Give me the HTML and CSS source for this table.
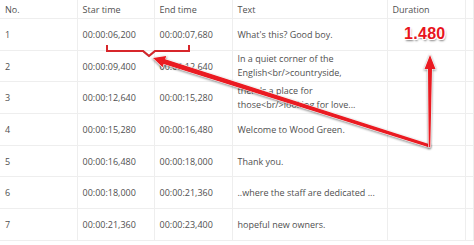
FILE: index.html
```html
<!DOCTYPE html>
<html>
<head>
<meta charset="utf-8">
<link rel="stylesheet" href="styles.css">
</head>
<body>
<div class="page">
  <table class="subs">
    <colgroup>
      <col class="c-no"><col class="c-start"><col class="c-end"><col class="c-text"><col class="c-dur"><col class="c-extra">
    </colgroup>
    <thead>
      <tr><th>No.</th><th>Star time</th><th>End time</th><th>Text</th><th>Duration</th><th></th></tr>
    </thead>
    <tbody>
      <tr><td>1</td><td>00:00:06,200</td><td>00:00:07,680</td><td>What's this? Good boy.</td><td></td><td></td></tr>
      <tr><td>2</td><td>00:00:09,400</td><td>00:00:12,640</td><td class="two">In a quiet corner of the English&lt;br/&gt;countryside,</td><td></td><td></td></tr>
      <tr><td>3</td><td>00:00:12,640</td><td>00:00:15,280</td><td class="two">there's a place for those&lt;br/&gt;looking for love...</td><td></td><td></td></tr>
      <tr><td>4</td><td>00:00:15,280</td><td>00:00:16,480</td><td>Welcome to Wood Green.</td><td></td><td></td></tr>
      <tr><td>5</td><td>00:00:16,480</td><td>00:00:18,000</td><td>Thank you.</td><td></td><td></td></tr>
      <tr><td>6</td><td>00:00:18,000</td><td>00:00:21,360</td><td>..where the staff are dedicated ...</td><td></td><td></td></tr>
      <tr><td>7</td><td>00:00:21,360</td><td>00:00:23,400</td><td>hopeful new owners.</td><td></td><td></td></tr>
    </tbody>
  </table>

  <svg class="annot" width="474" height="245" viewBox="0 0 474 245">
    <path class="brace" d="M107,45 L107,51 L143,51 L149,56 L155,51 L189,51 L189,45"/>
    <polygon class="arrow" points="153,58 166.2,55.9 165.2,59.2 430.5,144.6 429.5,147.4 163.6,64 162.6,67.3"/>
    <polygon class="arrow" points="430,55 435.5,69 432,69 430.3,147 428.7,147 428,69 424.5,69"/>
  </svg>
  <div class="callout">1.480</div>
</div>
</body>
</html>
```

FILE: styles.css
```css
html, body {
  margin: 0;
  padding: 0;
  background: #fff;
}

.page {
  position: relative;
  width: 474px;
  height: 245px;
  overflow: hidden;
}

.subs {
  width: 474px;
  border-collapse: collapse;
  table-layout: fixed;
  font-family: "Open Sans", "DejaVu Sans", sans-serif;
  font-size: 9px;
  color: #4f4f4f;
}

.c-no { width: 77px; }
.c-start { width: 77px; }
.c-end { width: 78px; }
.c-text { width: 155px; }
.c-dur { width: 78px; }

.subs th,
.subs td {
  text-align: left;
  font-weight: normal;
  padding: 0 4px 0 5px;
  border-right: 1px solid #eeeeee;
  border-bottom: 1px solid #eeeeee;
  vertical-align: middle;
  white-space: nowrap;
  overflow: hidden;
}

.subs th {
  height: 18px;
}

.subs td {
  height: 30.7px;
}

.subs td.two {
  white-space: normal;
  line-height: 14px;
}

.annot {
  position: absolute;
  left: 0;
  top: 0;
  overflow: visible;
}

.brace {
  fill: none;
  stroke: #d7262b;
  stroke-width: 2;
  stroke-linejoin: miter;
  filter: drop-shadow(0.5px 0.8px 0.6px rgba(0,0,0,0.35));
}

.arrow {
  fill: #ea1b22;
  stroke: #ffffff;
  stroke-width: 1.2;
  paint-order: stroke;
  filter: drop-shadow(0.8px 1px 0.8px rgba(0,0,0,0.45));
}

.callout {
  position: absolute;
  left: 404px;
  top: 25px;
  font-family: "Liberation Sans", Arial, sans-serif;
  font-weight: bold;
  font-size: 16px;
  letter-spacing: 0.3px;
  color: #e8141c;
  text-shadow:
    1px 0 0 #fff, -1px 0 0 #fff, 0 1px 0 #fff, 0 -1px 0 #fff,
    1px 1px 0 #fff, -1px -1px 0 #fff, 1px -1px 0 #fff, -1px 1px 0 #fff,
    1px 2px 2px rgba(0,0,0,0.5);
}
```
